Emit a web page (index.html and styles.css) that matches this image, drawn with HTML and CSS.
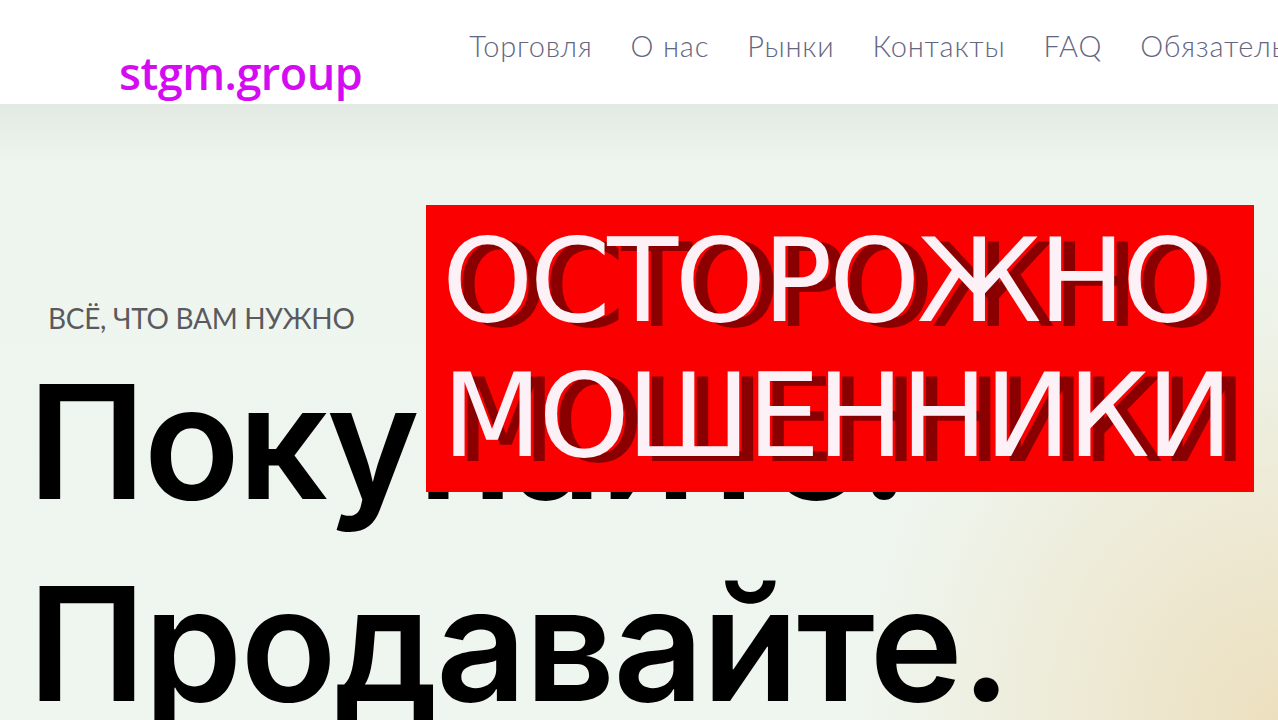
FILE: index.html
```html
<!DOCTYPE html>
<html lang="ru">
<head>
  <meta charset="UTF-8">
  <title>stgm.group</title>
  <link rel="stylesheet" href="styles.css">
</head>
<body>

  <!-- ШАПКА -->
  <header class="shapka">
    <a class="logo" href="#">stgm.group</a>
    <nav class="menu">
      <a href="#">Торговля</a>
      <a href="#">О нас</a>
      <a href="#">Рынки</a>
      <a href="#">Контакты</a>
      <a href="#">FAQ</a>
      <a href="#">Обязательства</a>
    </nav>
  </header>

  <!-- ГЛАВНЫЙ БЛОК -->
  <section class="hero">
    <p class="podzag">ВСЁ, ЧТО ВАМ НУЖНО</p>
    <h1 class="zagolovok">Покупайте.<br>Продавайте.</h1>

    <div class="preduprezhdenie">
      ОСТОРОЖНО<br>МОШЕННИКИ
    </div>
  </section>

</body>
</html>
```

FILE: styles.css
```css
html, body {
  margin: 0;
  padding: 0;
  height: 100%;
  overflow: hidden;
}
body {
  font-family: Lato, "Open Sans", sans-serif;
  background: #eff6ef;
}
.shapka {
  display: flex;
  height: 104px;
  background: white;
  position: relative;
  z-index: 2;
}
.logo {
  align-self: flex-end;
  margin: 0 0 1px 119px;
  font-family: "Open Sans", sans-serif;
  font-weight: 600;
  font-size: 45px;
  color: #d40cf2;
  text-decoration: none;
  letter-spacing: -0.5px;
}
.menu {
  display: flex;
  gap: 38px;
  margin-left: 107px;
  padding-top: 28px;
  white-space: nowrap;
}
.menu a {
  font-family: Lato, sans-serif;
  font-weight: 300;
  font-size: 29px;
  letter-spacing: 0.8px;
  color: #64667f;
  text-decoration: none;
}
.hero {
  position: relative;
  height: 616px;
  padding: 0 0 0 48px;
  background:
    radial-gradient(ellipse 420px 460px at 100% 100%, rgba(236, 222, 188, 0.95), rgba(239, 246, 239, 0) 100%),
    linear-gradient(#e3e9e3, #eef5ee 60px, #eff6ef);
}
.podzag {
  margin: 0;
  padding-top: 197px;
  font-size: 28px;
  color: #5a5a5e;
  letter-spacing: -0.3px;
}
.zagolovok {
  margin: 6px 0 0 -20px;
  font-family: Inter, sans-serif;
  font-weight: 600;
  font-size: 158px;
  line-height: 202px;
  color: #000;
  letter-spacing: -2px;
}
.preduprezhdenie {
  position: absolute;
  left: 426px;
  top: 101px;
  width: 812px;
  height: 270px;
  padding: 8px 0 9px 16px;
  background: #fb0000;
  font-family: "DejaVu Sans", sans-serif;
  font-size: 116px;
  line-height: 135px;
  letter-spacing: -3.5px;
  color: #fdf1f8;
  text-shadow: 14px 5px 0 #8a0000;
  white-space: nowrap;
}
```
